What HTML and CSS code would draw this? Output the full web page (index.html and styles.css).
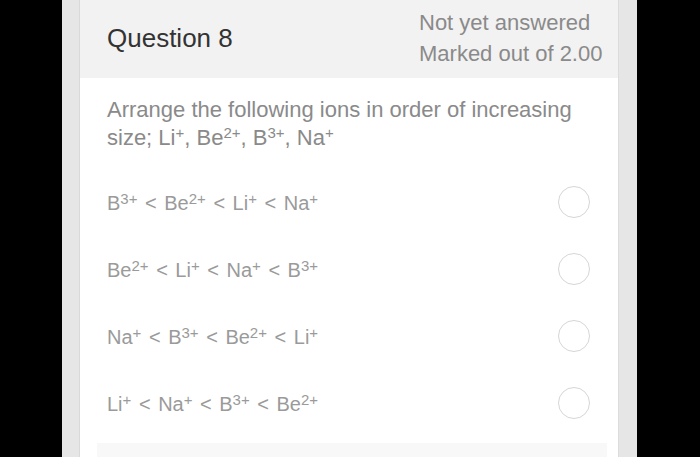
FILE: index.html
```html
<!DOCTYPE html>
<html>
<head>
<meta charset="utf-8">
<link rel="stylesheet" href="styles.css">
</head>
<body>
<div class="frame">
  <div class="edge edge-left"></div>
  <div class="strip strip-left"></div>
  <main class="card">
    <header class="head">
      <h1 class="title">Question 8</h1>
      <div class="status">
        <div>Not yet answered</div>
        <div>Marked out of 2.00</div>
      </div>
    </header>
    <p class="prompt">Arrange the following ions in order of increasing size; Li<sup>+</sup>, Be<sup>2+</sup>, B<sup>3+</sup>, Na<sup>+</sup></p>
    <ul class="options">
      <li class="option"><span class="label">B<sup>3+</sup> &lt; Be<sup>2+</sup> &lt; Li<sup>+</sup> &lt; Na<sup>+</sup></span><span class="radio"></span></li>
      <li class="option"><span class="label">Be<sup>2+</sup> &lt; Li<sup>+</sup> &lt; Na<sup>+</sup> &lt; B<sup>3+</sup></span><span class="radio"></span></li>
      <li class="option"><span class="label">Na<sup>+</sup> &lt; B<sup>3+</sup> &lt; Be<sup>2+</sup> &lt; Li<sup>+</sup></span><span class="radio"></span></li>
      <li class="option"><span class="label">Li<sup>+</sup> &lt; Na<sup>+</sup> &lt; B<sup>3+</sup> &lt; Be<sup>2+</sup></span><span class="radio"></span></li>
    </ul>
    <div class="foot"></div>
  </main>
  <div class="strip strip-right"></div>
  <div class="edge edge-right"></div>
</div>
</body>
</html>
```

FILE: styles.css
```css
html, body {
  margin: 0;
  padding: 0;
  background: #000;
}
body {
  font-family: "Liberation Sans", Arial, sans-serif;
  width: 700px;
  height: 457px;
  overflow: hidden;
}
.frame {
  display: flex;
  height: 457px;
}
.edge {
  background: #000;
}
.edge-left { width: 62px; }
.edge-right { flex: 1; }
.strip {
  background: #e6e6e6;
}
.strip-left {
  width: 17px;
  border-right: 1px solid #d9d9d9;
}
.strip-right {
  width: 18px;
  border-left: 1px solid #dcdcdc;
}
.card {
  width: 538px;
  background: #fff;
  display: flex;
  flex-direction: column;
}
.card > * {
  flex-shrink: 0;
}
.head {
  height: 78px;
  background: #f2f2f2;
  display: flex;
  justify-content: space-between;
  align-items: flex-start;
  padding: 0 12px 0 27px;
  box-sizing: border-box;
}
.title {
  margin: 23px 0 0;
  font-size: 26px;
  line-height: 30px;
  font-weight: normal;
  color: #333;
}
.status {
  padding-top: 7px;
  font-size: 22px;
  line-height: 31px;
  color: #8a8a8a;
  width: 187px;
}
.prompt {
  margin: 18px 24px 0 27px;
  font-size: 22px;
  line-height: 28px;
  color: #8a8a8a;
}
.prompt sup {
  font-size: 15px;
  line-height: 0;
  vertical-align: 7px;
}
.options {
  list-style: none;
  margin: 17px 0 0;
  padding: 0 28px 0 27px;
}
.option {
  height: 67px;
  display: flex;
  align-items: center;
  justify-content: space-between;
}
.label {
  font-size: 20px;
  line-height: 24px;
  color: #9a9a9a;
  word-spacing: 2px;
}
.label sup {
  font-size: 15px;
  line-height: 0;
  vertical-align: 6px;
}
.radio {
  width: 30px;
  height: 30px;
  border: 1.5px solid #d6d6d6;
  border-radius: 50%;
  margin-top: -1px;
}
.foot {
  margin: 6px 11px 0 17px;
  height: 20px;
  background: #f8f8f8;
}
```
